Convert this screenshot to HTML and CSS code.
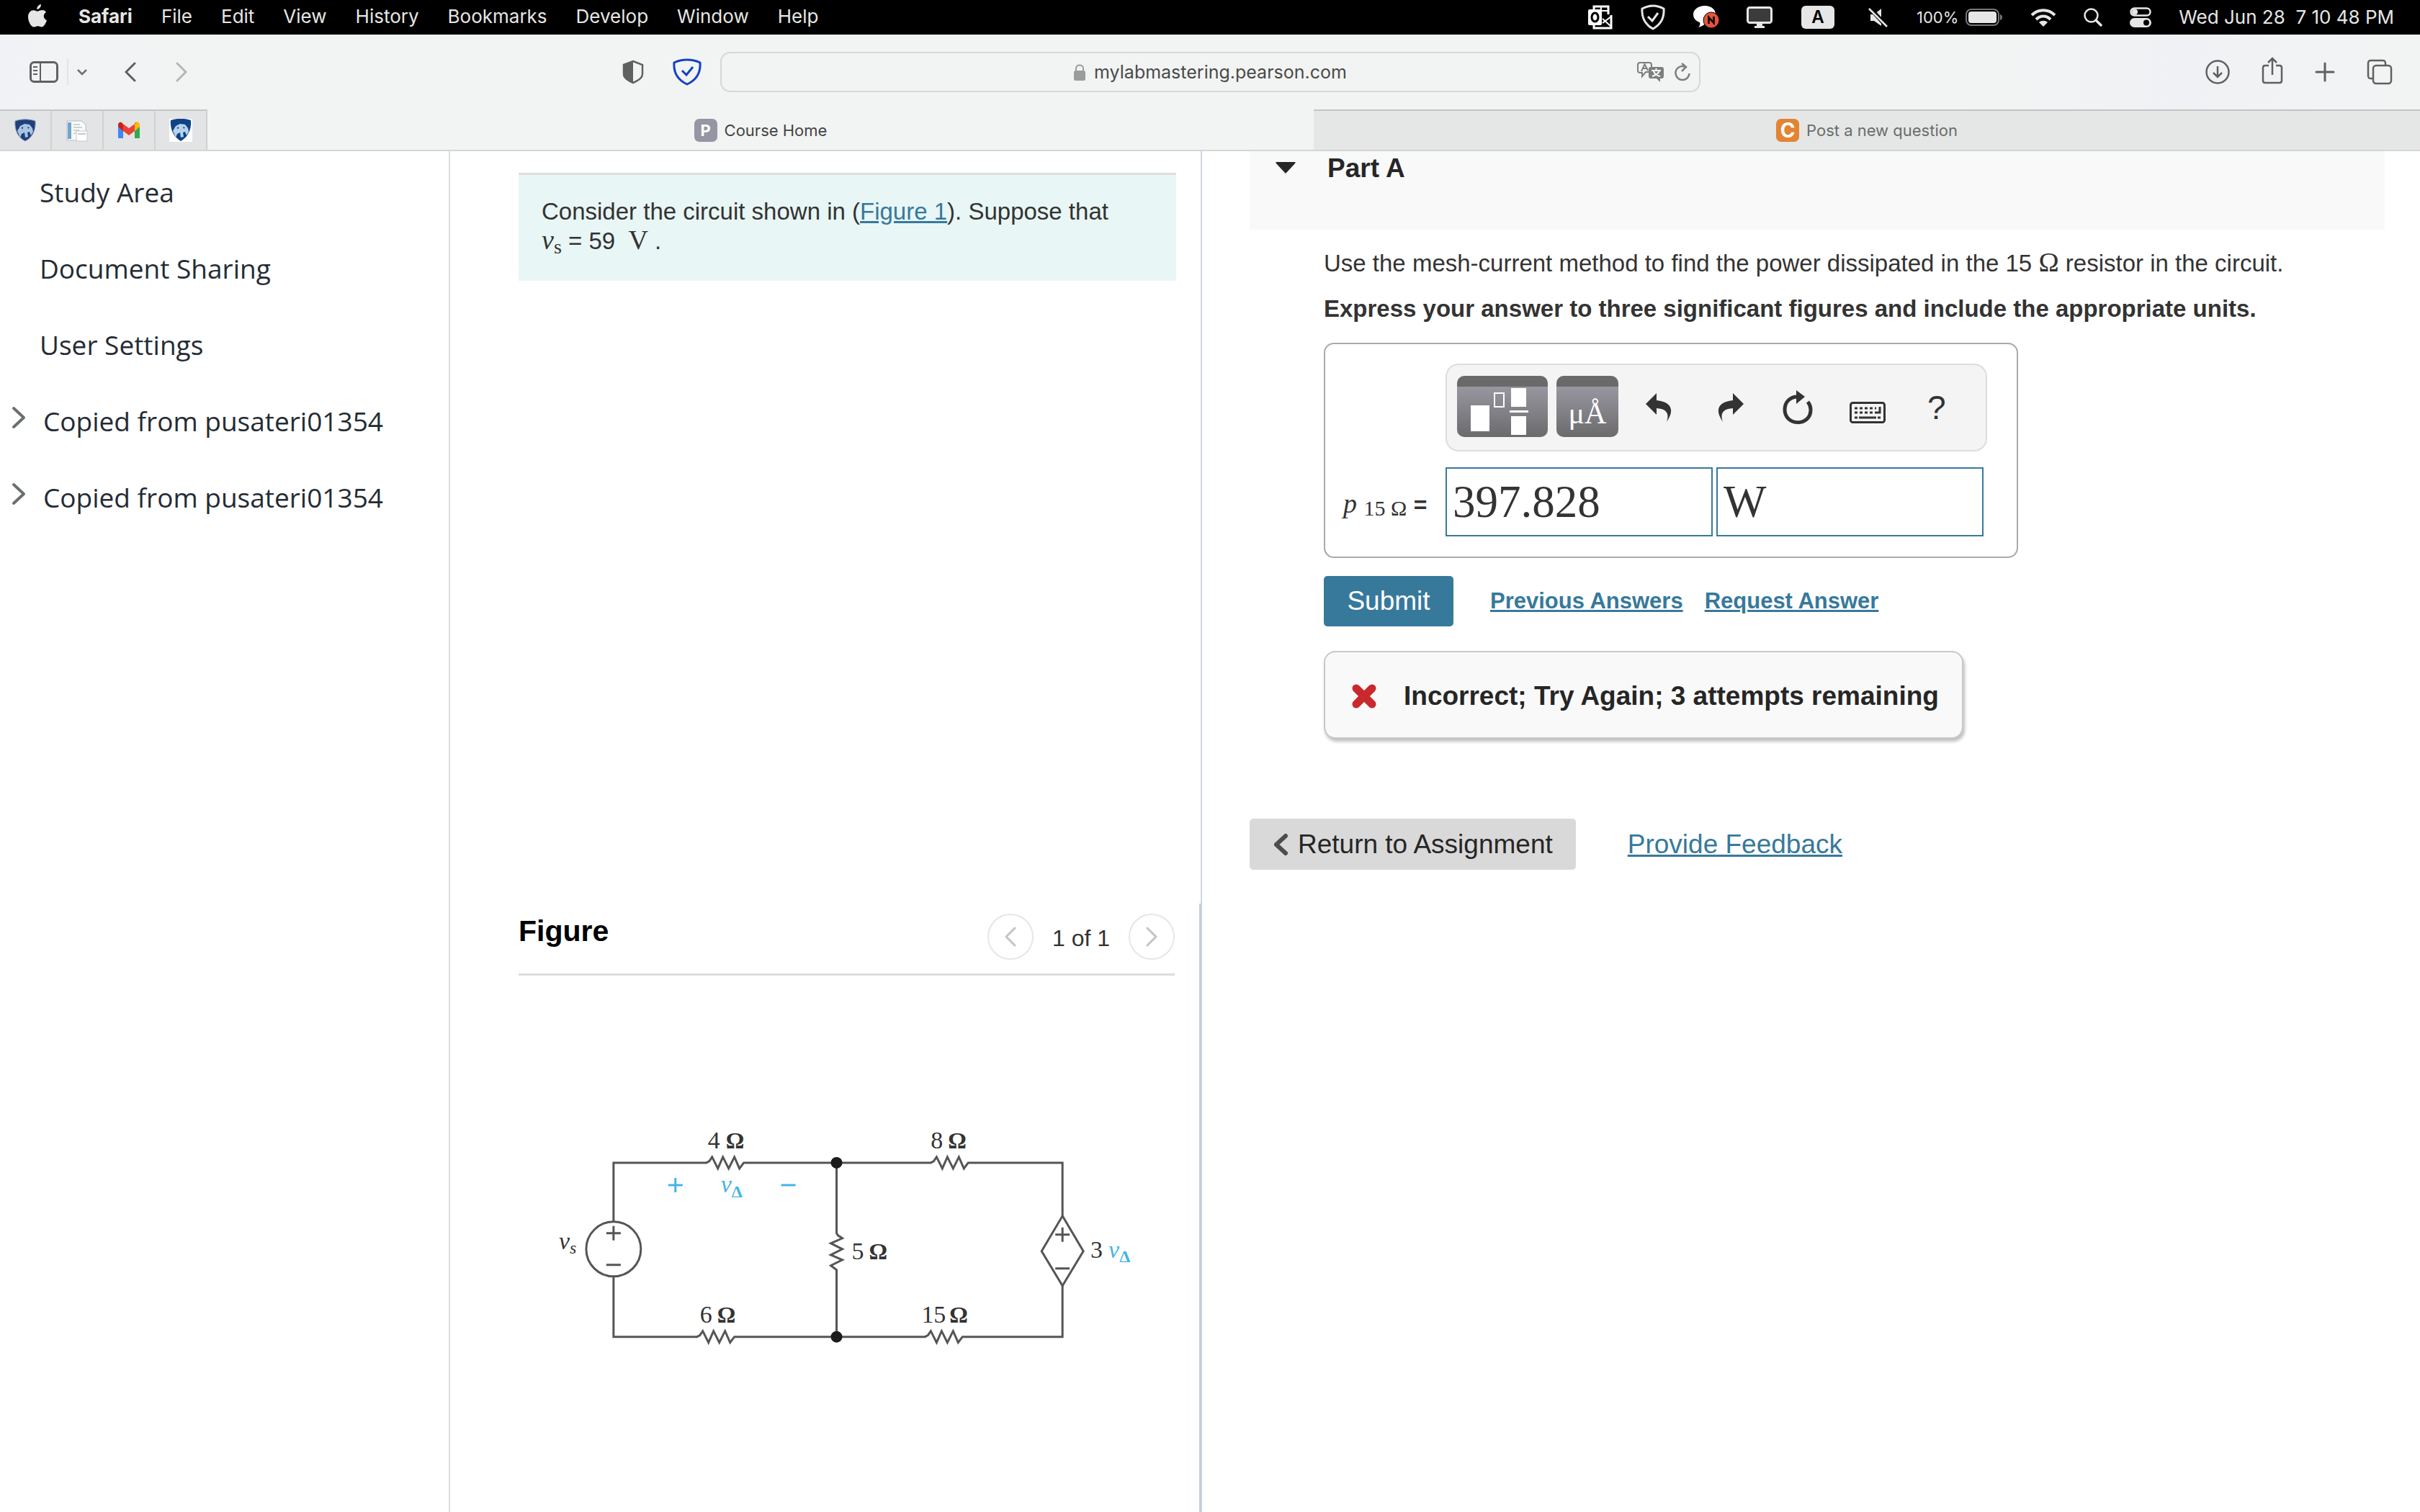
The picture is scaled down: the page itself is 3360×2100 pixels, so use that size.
FILE: index.html
```html
<!DOCTYPE html>
<html lang="en">
<head>
  <meta charset="UTF-8">
  <meta name="viewport" content="width=device-width, initial-scale=1.0">
  <title>Course Home</title>
  <link rel="stylesheet" href="styles.css">
</head>
<body>
  <header class="menubar">
    <nav class="menus">
      <svg class="apple" width="26" height="32" viewBox="0 0 26 32"><path fill="#e6e6e6" d="M18 0c.3 3.500-2.600 7-5.800 7C11.900 3.800 14.700.5 18 0zM25 11c-4.800 2.800-4 9.300 1 11.300-1.400 4.200-4.300 9.200-7 9.200-2 0-2.700-1.300-5.400-1.300-2.700 0-3.500 1.300-5.400 1.300C4 31.500 0 23.500 0 17.500 0 11.500 3.800 8.200 7.500 8.200c2.300 0 4.200 1.500 5.800 1.500 1.500 0 3.700-1.600 6.500-1.600 2.200 0 4.100 1.100 5.200 2.900z"/></svg>
      <b>Safari</b>
      <span>File</span>
      <span>Edit</span>
      <span>View</span>
      <span>History</span>
      <span>Bookmarks</span>
      <span>Develop</span>
      <span>Window</span>
      <span>Help</span>
    </nav>
    <div class="status">
      <svg width="34" height="34" viewBox="0 0 34 34"><path fill="none" stroke="#fff" stroke-width="3" d="M8 7V2h20v11M8 27v5h24V14"/><path fill="none" stroke="#fff" stroke-width="2" d="M18 2v8M18 8h10M20 19l12 11M32 16l-12 9"/><rect y="6" width="19" height="22" rx="2" fill="#fff"/><ellipse cx="9.500" cy="17" rx="4.500" ry="6" fill="none" stroke="#000" stroke-width="3"/></svg>
      <svg width="36" height="36" viewBox="0 0 36 36"><path fill="none" stroke="#e6e6e6" stroke-width="3" d="M18 2c5 0 10 1.500 15 4 1 13-4 22-15 28C7 28 2 19 3 6c5-2.500 10-4 15-4z"/><path fill="none" stroke="#e6e6e6" stroke-width="3" d="M11 17l6 6 8-11"/></svg>
      <svg width="36" height="32" viewBox="0 0 36 32"><path fill="#fff" d="M16 0c9 0 15 5 15 12s-6 13-14 13c-3 2-6 4-10 5 2-2 3-4 2-7C3 21 0 17 0 12 0 5 7 0 16 0z"/><circle cx="25" cy="20" r="11" fill="#e5533a" stroke="#000" stroke-width="1"/><path fill="none" stroke="#000" stroke-width="2.500" d="M21.500 25v-9l7 8v-9"/></svg>
      <svg width="36" height="30" viewBox="0 0 36 30"><rect x="1.500" y="1.500" width="33" height="21" rx="3" fill="#3b3b3b" stroke="#e6e6e6" stroke-width="3"/><path fill="#e6e6e6" d="M14 23h8v4h3v3H11v-3h3z"/></svg>
      <span class="input-source">A</span>
      <svg width="30" height="28" viewBox="0 0 30 28"><path fill="#e6e6e6" d="M4 10h5L19 2v24l-10-7H4z"/><path stroke="#000" stroke-width="6" d="M3 1l24 26"/><path stroke="#e6e6e6" stroke-width="2.500" d="M2 2l25 25"/></svg>
      <span class="battery-level">100%</span>
      <svg class="battery" width="52" height="24" viewBox="0 0 52 24"><rect x="1" y="1" width="45" height="22" rx="7" fill="none" stroke="#777" stroke-width="2"/><rect x="4" y="4" width="39" height="16" rx="4" fill="#e6e6e6"/><path fill="#777" d="M48 8c4 1 4 7 0 8z"/></svg>
      <svg width="36" height="26" viewBox="0 0 36 26"><g fill="none" stroke="#e6e6e6" stroke-width="4"><path d="M2 10c9-9 23-9 32 0M8 16c6-6 14-6 20 0"/></g><path fill="#e6e6e6" d="M18 26l-6-6c3-3 9-3 12 0z"/></svg>
      <svg width="26" height="26" viewBox="0 0 26 26"><circle cx="10.500" cy="10.500" r="9" fill="none" stroke="#e6e6e6" stroke-width="2.500"/><path stroke="#e6e6e6" stroke-width="3.500" stroke-linecap="round" d="M17 17l7 7"/></svg>
      <svg width="30" height="28" viewBox="0 0 30 28"><rect x="1.500" y="1.500" width="27" height="10" rx="5" fill="none" stroke="#e6e6e6" stroke-width="2.500"/><circle cx="7" cy="6.500" r="4" fill="#e6e6e6"/><rect y="15" width="30" height="13" rx="6.500" fill="#e6e6e6"/><circle cx="23" cy="21.500" r="4" fill="#000"/></svg>
      <time class="clock">Wed Jun 28&nbsp; 7 10 48 PM</time>
    </div>
  </header>

  <div class="toolbar">
    <div class="tools-left">
      <button class="tool" aria-label="Sidebar"><svg width="40" height="30" viewBox="0 0 40 30"><rect x="1.500" y="1.500" width="37" height="27" rx="5" fill="none" stroke="#5f6160" stroke-width="3"/><path stroke="#5f6160" stroke-width="2" d="M15 2v26M5 8h6M5 13h6M5 18h6"/></svg></button>
      <span class="divider"></span>
      <button class="tool" aria-label="Tab groups"><svg width="14" height="9" viewBox="0 0 14 9"><path fill="none" stroke="#6f7170" stroke-width="2.500" d="M1 1l6 6 6-6"/></svg></button>
      <button class="tool back" aria-label="Back"><svg width="16" height="28" viewBox="0 0 16 28"><path fill="none" stroke="#5f6160" stroke-width="3" stroke-linecap="round" stroke-linejoin="round" d="M14 2L2 14l12 12"/></svg></button>
      <button class="tool" aria-label="Forward"><svg width="16" height="28" viewBox="0 0 16 28"><path fill="none" stroke="#b4b6b5" stroke-width="3" stroke-linecap="round" stroke-linejoin="round" d="M2 2l12 12L2 26"/></svg></button>
    </div>
    <div class="tools-center">
      <button class="tool" aria-label="Privacy report"><svg width="30" height="34" viewBox="0 0 30 34"><path fill="none" stroke="#5f6160" stroke-width="2.500" d="M15 2l13 5v13c0 5-6 9-13 12C8 29 2 25 2 20V7z"/><path fill="#5f6160" d="M15 1v32C7 29 1 25 1 20V6z"/></svg></button>
      <button class="tool" aria-label="Ad blocker"><svg width="40" height="38" viewBox="0 0 40 38"><path fill="none" stroke="#1441c4" stroke-width="3" d="M20 2c6 0 12 1 18 4 1 14-5 24-18 30C7 30 1 20 2 6c6-3 12-4 18-4z"/><path fill="none" stroke="#1441c4" stroke-width="3" d="M13 17l6 6 9-11"/></svg></button>
      <div class="address">
        <span></span>
        <span class="host"><svg width="16" height="23" viewBox="0 0 16 23"><path fill="none" stroke="#9b9d9c" stroke-width="2" d="M3 10V6c0-6 10-6 10 0v4"/><rect y="9" width="16" height="14" rx="2.500" fill="#9b9d9c"/></svg>mylabmastering.pearson.com</span>
        <span class="address-tools">
          <svg width="38" height="28" viewBox="0 0 38 28"><path fill="none" stroke="#7d7f7e" stroke-width="2" d="M16 14h-4l-5 6v-5H4c-2 0-3-1-3-3V4c0-2 1-3 3-3h13c2 0 3 1 3 3v3"/><path fill="none" stroke="#7d7f7e" stroke-width="2" d="M6 13l4.500-10L15 12M8 9h6"/><path fill="#7d7f7e" d="M19 7h15c2 0 3 1 3 3v10c0 2-1 3-3 3h-2v5l-5-5h-8c-2 0-3-1-3-3V10c0-2 1-3 3-3z"/><path fill="none" stroke="#fff" stroke-width="2" d="M20 12h13M26.500 9v3M31 12c-1 4-4 6-10 8M23 13c1 3 4 6 9 7"/></svg>
          <svg width="22" height="26" viewBox="0 0 22 26"><path fill="none" stroke="#7d7f7e" stroke-width="2.500" d="M15 6C8 3 1 8 1.500 15c1 12 18 12 19 0M10 1l6 5-6 6"/></svg>
        </span>
      </div>
    </div>
    <div class="tools-right">
      <button class="tool" aria-label="Downloads"><svg width="34" height="34" viewBox="0 0 34 34"><circle cx="17" cy="17" r="15.500" fill="none" stroke="#5f6160" stroke-width="2.500"/><path fill="none" stroke="#5f6160" stroke-width="2.500" d="M17 9v15M11 18l6 6 6-6"/></svg></button>
      <button class="tool" aria-label="Share"><svg class="share" width="30" height="38" viewBox="0 0 30 38"><path fill="none" stroke="#5f6160" stroke-width="2.500" d="M10 12H5c-2 0-3 1-3 3v18c0 2 1 3 3 3h20c2 0 3-1 3-3V15c0-2-1-3-3-3h-5M15 25V2M9 8l6-6 6 6"/></svg></button>
      <button class="tool" aria-label="New tab"><svg width="28" height="28" viewBox="0 0 28 28"><path stroke="#5f6160" stroke-width="3" stroke-linecap="round" d="M14 2v24M2 14h24"/></svg></button>
      <button class="tool" aria-label="Tab overview"><svg width="36" height="36" viewBox="0 0 36 36"><path fill="none" stroke="#5f6160" stroke-width="2.500" d="M9 27H6c-3 0-4-1-4-4V6c0-3 1-4 4-4h16c3 0 4 1 4 4v3"/><rect x="9" y="9" width="25" height="25" rx="4" fill="none" stroke="#5f6160" stroke-width="2.500"/></svg></button>
    </div>
  </div>

  <div class="tabs">
    <div class="tab pinned"><svg width="32" height="32" viewBox="0 0 32 32"><path fill="#1e407c" stroke="#8c9cba" d="M2 3c9-3 19-3 28 0 1 13-4 23-14 28C6 26 1 16 2 3z"/><path fill="#a9c3e2" d="M5 17l4-7 6-3 7 1 4 5 1 5-3 5-2-5-3 1 1 6-4 1-1-7-4 2-2 5-2-5z"/><path fill="#1e407c" d="M19 11l3 1-2 2zM10 13l3-2v3z"/></svg></div>
    <div class="tab pinned"><svg width="32" height="32" viewBox="0 0 32 32"><path fill="#fafafa" stroke="#b9bcbd" d="M2 3h20l6 5v22H2z"/><path fill="#6ea5d2" d="M3 5h5v23H3z"/><path stroke="#cfd2d3" stroke-width="2" d="M11 8h9M11 12h12M11 16h8M11 20h5"/><path fill="#fff" stroke="#c5c8c9" d="M15 17h15v14H15z"/><path stroke="#c5c8c9" stroke-width="2" d="M17 21h11"/></svg></div>
    <div class="tab pinned"><svg width="30" height="24" viewBox="0 0 30 24"><path fill="#4285f4" d="M0 5v17c0 1 1 1 2 1h5V9z"/><path fill="#34a853" d="M30 5v17c0 1-1 1-2 1h-5V9z"/><path fill="#fbbc04" d="M23 4v9l7-6V4c0-3-4-5-7-2z"/><path fill="#c5221f" d="M0 4v3l7 6V4L5 1C2 0 0 2 0 4z"/><path fill="#ea4335" d="M4 1l11 8 11-8c-1 0-2 0-3 1v11l-8 6-8-6V3z"/></svg></div>
    <div class="tab pinned"><svg width="32" height="32" viewBox="0 0 32 32"><path fill="#fff" d="M0 0h32v32H0z"/><path fill="#0f4388" d="M2 2c9-3 19-3 28 0 1 13-4 23-14 29C6 25 1 15 2 2z"/><path fill="#b6d3ee" d="M5 17l4-7 6-3 7 1 4 5 1 5-3 5-2-5-3 1 1 6-4 1-1-7-4 2-2 5-2-5z"/><path fill="#0f4388" d="M19 11l3 1-2 2zM10 13l3-2v3z"/></svg></div>
    <div class="tab active"><span class="favicon grey">P</span>Course Home</div>
    <div class="tab"><span class="favicon orange">C</span>Post a new question</div>
  </div>

  <main class="page">
    <aside class="sidebar">
      <a href="#">Study Area</a>
      <a href="#">Document Sharing</a>
      <a href="#">User Settings</a>
      <a href="#" class="folder"><svg width="20" height="32" viewBox="0 0 20 32"><path fill="none" stroke="#6a7070" stroke-width="4" stroke-linecap="round" stroke-linejoin="round" d="M3 3l14 13L3 29"/></svg>Copied from pusateri01354</a>
      <a href="#" class="folder"><svg width="20" height="32" viewBox="0 0 20 32"><path fill="none" stroke="#6a7070" stroke-width="4" stroke-linecap="round" stroke-linejoin="round" d="M3 3l14 13L3 29"/></svg>Copied from pusateri01354</a>
    </aside>

    <div class="problem">
      <section class="intro-pane">
        <p class="intro">Consider the circuit shown in (<a href="#figure">Figure 1</a>). Suppose that<br><span class="math"><i>v</i><sub>s</sub></span> = 59 &nbsp;<span class="math">V</span> .</p>
      </section>
      <section class="figure-pane" id="figure">
        <div class="figure-head">
          <h2>Figure</h2>
          <div class="pager">
            <button class="round" aria-label="Previous figure"><svg width="18" height="28" viewBox="0 0 18 28"><path fill="none" stroke="#c4c4c4" stroke-width="3" stroke-linecap="round" stroke-linejoin="round" d="M15 2L3 14l12 12"/></svg></button>
            <span>1 of 1</span>
            <button class="round" aria-label="Next figure"><svg width="18" height="28" viewBox="0 0 18 28"><path fill="none" stroke="#c4c4c4" stroke-width="3" stroke-linecap="round" stroke-linejoin="round" d="M3 2l12 12L3 26"/></svg></button>
          </div>
        </div>
        <svg class="circuit" viewBox="0 0 912 340">
          <!-- wires -->
          <g class="wire">
            <path d="M132 143V61H261l4-2 4-6 8 16 7-16 8 16 8-16 7 16 6-8H573l4-2 4-6 8 16 7-16 8 16 8-16 7 16 6-8H756v74"/>
            <path d="M132 219v84H248l4-2 4-6 8 16 7-16 8 16 8-16 7 16 6-8H565l4-2 4-6 8 16 7-16 8 16 8-16 7 16 6-8H756v-71"/>
            <path d="M442 61v98l2 3 6 4-16 7 16 8-16 8 16 7-16 8 8 6V303"/>
            <!-- sources -->
            <circle cx="132" cy="181" r="38"/>
            <path d="M756 135l29 49-29 48-29-48z"/>
            <path d="M122 159h20M132 149v20M122 203h20M746 161h20M756 151v20M746 208h20"/>
          </g>
          <circle class="node" cx="442" cy="61" r="8"/>
          <circle class="node" cx="442" cy="303" r="8"/>
          <path class="polarity" d="M208 92h20M218 82v20M365 92h20"/>
          <!-- labels -->
          <text x="263" y="41">4</text><text x="288" y="41" class="ohm">Ω</text>
          <text x="573" y="41">8</text><text x="597" y="41" class="ohm">Ω</text>
          <text x="252" y="283">6</text><text x="276" y="283" class="ohm">Ω</text>
          <text x="560" y="283">15</text><text x="599" y="283" class="ohm">Ω</text>
          <text x="463" y="195">5</text><text x="487" y="195" class="ohm">Ω</text>
          <text x="56" y="181"><tspan class="var">v</tspan><tspan class="var sub" dy="6">s</tspan></text>
          <text x="281" y="102" class="delta"><tspan class="var">v</tspan><tspan class="sub" dy="7">Δ</tspan></text>
          <text x="795" y="193">3</text>
          <text x="820" y="193" class="delta"><tspan class="var">v</tspan><tspan class="sub" dy="6">Δ</tspan></text>
        </svg>
      </section>
    </div>

    <div class="work">
      <h2 class="part-head"><svg width="28" height="16" viewBox="0 0 28 16"><path fill="#262626" d="M2 0h24c2 0 2 1 1 2L15 15c-1 1-1 1-2 0L1 2C0 1 0 0 2 0z"/></svg>Part A</h2>
      <div class="part-body">
        <p>Use the mesh-current method to find the power dissipated in the 15 <span class="math">Ω</span> resistor in the circuit.</p>
        <p><b>Express your answer to three significant figures and include the appropriate units.</b></p>

        <form class="answer" id="answer-form">
          <div class="answer-tools">
            <button type="button" class="dark wide" aria-label="Templates"><svg width="126" height="85" viewBox="0 0 126 85"><path fill="#fff" d="M19 41h26v36H19zM75 17h21v26H75zM75 56h21v26H75zM73 48h26v3H73z"/><rect x="52" y="24" width="13" height="19" fill="none" stroke="#fff" stroke-width="2"/></svg></button>
            <button type="button" class="dark units" aria-label="Units">μÅ</button>
            <button type="button" class="undo" aria-label="Undo"><svg width="36" height="40" viewBox="0 0 36 40"><path fill="#333" d="M0 15L15 0v10c20 2 26 13 14 30 4-12 0-18-14-19v9z"/></svg></button>
            <button type="button" class="redo" aria-label="Redo"><svg width="36" height="40" viewBox="0 0 36 40"><path fill="#333" d="M36 15L21 0v10C1 12-5 23 7 40 3 28 7 22 21 21v9z"/></svg></button>
            <button type="button" class="reset" aria-label="Reset"><svg width="42" height="48" viewBox="0 0 42 48"><path fill="none" stroke="#333" stroke-width="5" d="M23 9C11 8 3 16 3 27c0 23 36 24 36 0 0-4-1-7-4-11"/><path fill="#333" d="M19 0l12 9-12 10z"/></svg></button>
            <button type="button" class="keyboard" aria-label="Keyboard"><svg width="50" height="30" viewBox="0 0 50 30"><rect x="1.500" y="1.500" width="47" height="27" rx="3" fill="none" stroke="#333" stroke-width="3"/><path fill="none" stroke="#333" stroke-width="3" stroke-dasharray="4 3" d="M7 9h30M7 15h30M7 22h4M39 22h5"/><path fill="none" stroke="#333" stroke-width="3" d="M13 22h24M42 7v8h-5"/></svg></button>
            <button type="button" class="help" aria-label="Help">?</button>
          </div>
          <label class="math" for="value"><i>p</i> <small>15 Ω</small> <b>=</b></label>
          <div class="fields">
            <input type="text" id="value" value="397.828">
            <input type="text" id="unit" value="W" aria-label="Units">
          </div>
        </form>

        <div class="actions">
          <button class="submit" form="answer-form">Submit</button>
          <a href="#">Previous Answers</a>
          <a href="#">Request Answer</a>
        </div>

        <div class="feedback"><svg width="36" height="34" viewBox="0 0 36 34"><path stroke="#c9282d" stroke-width="11" stroke-linecap="round" d="M7 6l22 22M29 6L7 28"/></svg>Incorrect; Try Again; 3 attempts remaining</div>
      </div>
      <div class="footer">
        <button class="return"><svg width="22" height="32" viewBox="0 0 22 32"><path fill="none" stroke="#4d4d4d" stroke-width="6" stroke-linecap="round" stroke-linejoin="round" d="M18 4L5 16l13 12"/></svg>Return to Assignment</button>
        <a href="#">Provide Feedback</a>
      </div>
    </div>
  </main>
</body>
</html>
```
FILE: styles.css
```css
* {
  box-sizing: border-box;
}

body {
  margin: 0;
  min-height: 100vh;
  display: flex;
  flex-direction: column;
  font-family: "Liberation Sans", Arial, sans-serif;
  font-size: 33px;
  color: #333;
  background: #fff;
}

svg {
  display: block;
  flex: none;
}

button {
  margin: 0;
  padding: 0;
  border: 0;
  background: none;
  font-family: inherit;
  color: inherit;
}

p,
h2 {
  margin: 0;
}

a {
  color: #37799b;
}

.math {
  font-family: "Liberation Serif", "Times New Roman", serif;
}

/* menu bar */
.menubar {
  display: flex;
  justify-content: space-between;
  height: 48px;
  padding: 0 36px 0 39px;
  background: #000;
  color: #e6e6e6;
  font-family: Inter, sans-serif;
  font-size: 26px;
  line-height: 46px;
  white-space: nowrap;
}

.menus,
.status {
  display: flex;
  gap: 40px;
}

.status {
  align-items: center;
  gap: 38px;
}

.apple {
  margin: 6px 4px 0 0;
}

.input-source {
  width: 46px;
  height: 32px;
  margin: 0 8px 0 2px;
  border-radius: 6px;
  background: #e6e6e6;
  color: #000;
  font-size: 24px;
  font-weight: 600;
  line-height: 32px;
  text-align: center;
}

.battery-level {
  font-size: 22px;
}

.battery {
  margin-left: -28px;
}

/* browser toolbar */
.toolbar {
  display: flex;
  align-items: center;
  height: 104px;
  padding: 0 38px 0 41px;
  background: linear-gradient(90deg, #f1f2f5, #f2f4f3 10%, #f2f4f3 80%, #eff1f4 90%, #f2f4f4);
}

.tools-left,
.tools-center,
.tools-right,
.host,
.address-tools {
  display: flex;
  align-items: center;
}

.tools-left {
  width: 823px;
}

.divider {
  width: 2px;
  height: 36px;
  margin: 0 12px;
  background: #e2e3e5;
}

.back {
  margin: 0 55px 0 52px;
}

.tools-center {
  flex: 1;
  gap: 40px;
}

.address {
  flex: 1;
  display: grid;
  grid-template-columns: 1fr auto 1fr;
  align-items: center;
  height: 56px;
  margin-left: -14px;
  padding: 0 12px;
  border: 2px solid #d6d8d7;
  border-radius: 14px;
  font-family: Inter, sans-serif;
  font-size: 25px;
  color: #4a4a4a;
}

.host {
  gap: 12px;
}

.address-tools {
  justify-content: flex-end;
  gap: 14px;
}

.tools-right {
  justify-content: flex-end;
  gap: 44px;
  width: 961px;
}

.share {
  margin-top: -4px;
}

/* tab strip */
.tabs {
  display: flex;
  height: 58px;
  border-bottom: 2px solid #d4d6d5;
  background: #f2f4f3;
  font-family: Inter, sans-serif;
  font-size: 22px;
  color: #444;
}

.tab {
  flex: 1;
  display: flex;
  align-items: center;
  justify-content: center;
  gap: 10px;
  border-top: 2px solid #c3c5c4;
  background: #e5e7e6;
  color: #6b6d6c;
}

.pinned {
  flex: none;
  width: 72px;
  border-right: 2px solid #cfd1d2;
  background: #e3e4e6;
}

.active {
  border-top-color: transparent;
  background: #f2f4f3;
  color: #444;
}

.favicon {
  width: 32px;
  height: 32px;
  border-radius: 7px;
  color: #fff;
  font-weight: 700;
  line-height: 32px;
  text-align: center;
}

.grey {
  background: #9695a3;
}

.orange {
  background: #e28433;
  font-size: 28px;
}

/* page */
.page {
  flex: 1;
  display: grid;
  grid-template-columns: 625px 1044px minmax(0, 1fr);
}

.sidebar {
  padding: 4px 0 0 55px;
  border-right: 2px solid #ddd;
  font-family: "Open Sans", sans-serif;
  font-size: 37px;
  line-height: 106px;
}

.sidebar a {
  display: flex;
  align-items: center;
  color: #252c33;
  text-decoration: none;
}

.sidebar .folder {
  gap: 24px;
  margin-left: -39px;
}

.folder svg {
  margin-top: -10px;
}

.problem {
  display: flex;
  flex-direction: column;
}

.intro-pane {
  flex: 11 1 0;
  padding: 30px 34px 0 95px;
  border-right: 2px solid #cdd6e1;
}

.figure-pane {
  flex: 9 1 0;
  padding: 14px 34px 0 95px;
  border-right: 4px solid #c3d0de;
}

.intro {
  height: 150px;
  padding: 30px 32px 0;
  border-top: 3px solid #ddd;
  background: #e8f6f5;
  line-height: 41px;
}

.intro .math {
  font-size: 38px;
  line-height: 1;
}

.intro sub {
  font-size: 28px;
  line-height: 1;
  vertical-align: -6px;
}

.figure-head {
  display: flex;
  justify-content: space-between;
  height: 86px;
  border-bottom: 3px solid #ddd;
}

.figure-head h2 {
  font-size: 41px;
  line-height: 48px;
  color: #000;
}

.pager {
  display: flex;
  gap: 26px;
  font-size: 32px;
  line-height: 68px;
}

.round {
  display: flex;
  align-items: center;
  justify-content: center;
  width: 64px;
  height: 64px;
  border: 2px solid #e6e6e6;
  border-radius: 50%;
}

.circuit {
  width: 100%;
  margin-top: 199px;
  font-family: "Liberation Serif", "Times New Roman", serif;
  font-size: 34px;
  fill: #333;
}

.wire {
  fill: none;
  stroke: #555;
  stroke-width: 3;
}

.node {
  fill: #1c1c1c;
}

.polarity {
  stroke: #46b4e8;
  stroke-width: 3;
}

.ohm {
  font-weight: 700;
  font-size: 32px;
}

.var {
  font-style: italic;
}

.sub {
  font-size: 24px;
}

.delta {
  fill: #46b4e8;
}

.delta .sub {
  font-weight: 700;
}

/* answer column */
.work {
  padding: 0 49px 0 66px;
}

.part-head {
  display: flex;
  gap: 44px;
  height: 109px;
  padding: 3px 36px;
  background: #f9f9f9;
  font-size: 37px;
  line-height: 42px;
  color: #262626;
}

.part-head svg {
  margin-top: 12px;
}

.part-body {
  padding: 26px 103px 0;
}

.part-body p {
  line-height: 40px;
  margin-bottom: 23px;
}

.part-body p .math {
  font-size: 38px;
  line-height: 1;
}

.answer {
  display: grid;
  grid-template-columns: 142px minmax(0, 1fr);
  row-gap: 22px;
  width: 964px;
  margin-top: 27px;
  padding: 27px 41px 28px 25px;
  border: 2px solid #aaa;
  border-radius: 14px;
}

.answer-tools {
  grid-column: 2;
  display: flex;
  align-items: center;
  height: 122px;
  padding: 0 14px;
  border: 2px solid #ddd;
  border-radius: 18px;
  background: #f4f4f4;
}

.dark {
  height: 85px;
  margin: -3px 12px 0 0;
  border-radius: 10px;
  background: linear-gradient(#696a69 15px, #9897a0 15px, #6b6b6d);
  color: #fff;
}

.wide {
  width: 126px;
}

.units {
  width: 86px;
  padding-top: 18px;
  font-family: "Liberation Serif", "Times New Roman", serif;
  font-size: 42px;
}

.undo {
  margin-left: 26px;
}

.redo {
  margin-left: 64px;
}

.reset {
  margin-left: 54px;
}

.keyboard {
  margin: 14px 0 0 51px;
}

.help {
  margin-left: 58px;
  font-size: 46px;
}

.answer label {
  padding-top: 30px;
  font-size: 38px;
  line-height: 40px;
  white-space: nowrap;
}

.answer small {
  font-size: 30px;
  vertical-align: -4px;
}

.answer label b {
  font-family: "Liberation Sans", Arial, sans-serif;
  font-size: 32px;
}

.fields {
  display: flex;
  gap: 5px;
  margin-right: 5px;
}

.fields input {
  flex: 1;
  min-width: 0;
  height: 96px;
  padding: 0 8px;
  border: 2px solid #37799b;
  border-radius: 0;
  font-family: "Liberation Serif", "Times New Roman", serif;
  font-size: 63px;
  color: #333;
}

.actions {
  display: flex;
  align-items: center;
  gap: 30px;
  margin-top: 25px;
  font-size: 31px;
  font-weight: 700;
}

.submit {
  width: 180px;
  height: 70px;
  margin-right: 21px;
  border-radius: 5px;
  background: #37799b;
  color: #fff;
  font-size: 37px;
}

.feedback {
  display: flex;
  align-items: center;
  gap: 37px;
  width: fit-content;
  height: 122px;
  margin-top: 34px;
  padding: 3px 32px 0 36px;
  border: 2px solid #c8c8c8;
  border-radius: 16px;
  background: #f9f9f9;
  box-shadow: 2px 4px 4px #c0c0c0;
  font-size: 37px;
  font-weight: 700;
  color: #262626;
}

.footer {
  display: flex;
  align-items: center;
  gap: 72px;
  margin-top: 111px;
  font-size: 37px;
}

.return {
  display: flex;
  align-items: center;
  gap: 13px;
  height: 71px;
  padding: 0 32px;
  border-radius: 5px;
  background: #d9d9d9;
  color: #262626;
  font-size: 37px;
}
```
